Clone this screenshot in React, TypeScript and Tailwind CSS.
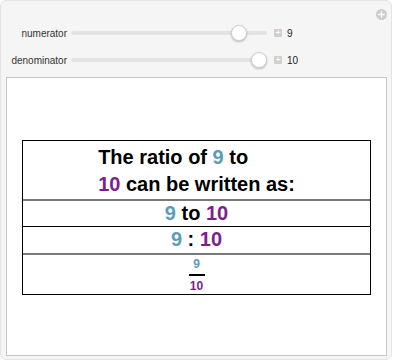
import { Plus } from "lucide-react";

const TEAL = "text-[#5b9db6]";
const PURPLE = "text-[#7d1e8f]";

interface SliderRowProps {
  label: string;
  value: number;
  min: number;
  max: number;
}

const SliderRow = ({ label, value, min, max }: SliderRowProps) => {
  const pct = (value - min) / (max - min);
  return (
    <div className="flex items-center h-5">
      <div className="w-[66px] text-right text-[10px] text-[#333]">{label}</div>
      <div className="relative ml-[4px] w-[196px] h-5 flex items-center">
        <div className="w-full h-[4px] rounded-full bg-[#e3e3e3]" />
        {/* thumb */}
        <div
          className="absolute top-1/2 -translate-y-1/2 w-4 h-4 rounded-full bg-white border border-[#d0d0d0] shadow-[0_1px_2px_rgba(0,0,0,0.25)]"
          style={{ left: `${pct * 180}px` }}
        />
      </div>
      <div className="ml-[7px] w-[8px] h-[8px] bg-[#cfcfcf] rounded-[1px] flex items-center justify-center">
        <span className="text-white text-[8px] leading-none font-bold">+</span>
      </div>
      <div className="ml-[5px] text-[10px] text-[#222]">{value}</div>
    </div>
  );
};

export default function App() {
  const num = 9;
  const den = 10;

  return (
    <div className="w-[394px] h-[363px] bg-white font-['Liberation_Sans',Arial,sans-serif]">
      <div className="relative w-[392px] h-[360px] bg-[#f5f5f5] border border-[#e4e4e4] rounded-[6px] pt-[22px]">
        {/* add button */}
        <div className="absolute top-[8px] right-[4px] w-[11px] h-[11px] rounded-full bg-[#cdcdcd] flex items-center justify-center">
          <Plus size={9} strokeWidth={3.5} className="text-white" />
        </div>

        <div className="flex flex-col gap-[7px]">
          <SliderRow label="numerator" value={num} min={1} max={10} />
          <SliderRow label="denominator" value={den} min={1} max={10} />
        </div>

        {/* output pane */}
        <div className="ml-[5px] mt-[7px] w-[381px] h-[279px] bg-white border border-[#c6c6c6] pt-[62px] pl-[15px]">
          <div className="w-[349px] border border-black text-black font-bold text-[20px]">
            <div className="h-[58px] flex justify-center pt-[3px]">
              <div className="text-left leading-[27px]">
                The ratio of <span className={TEAL}>{num}</span> to
                <br />
                <span className={PURPLE}>{den}</span> can be written as:
              </div>
            </div>
            <div className="h-[2px] bg-[#7a7a7a]" />
            <div className="h-[26px] leading-[24px] text-center border-b border-black">
              <span className={TEAL}>{num}</span> to <span className={PURPLE}>{den}</span>
            </div>
            <div className="h-[26px] leading-[24px] text-center">
              <span className={TEAL}>{num}</span> : <span className={PURPLE}>{den}</span>
            </div>
            <div className="h-[2px] bg-[#7a7a7a]" />
            <div className="h-[39px] flex justify-center pt-[3px]">
              <div className="flex flex-col items-center text-[12px] leading-[13px]">
                <span className={TEAL}>{num}</span>
                <div className="w-[16px] h-[2px] bg-black mt-[3px] mb-[4px]" />
                <span className={PURPLE}>{den}</span>
              </div>
            </div>
          </div>
        </div>
      </div>
    </div>
  );
}
